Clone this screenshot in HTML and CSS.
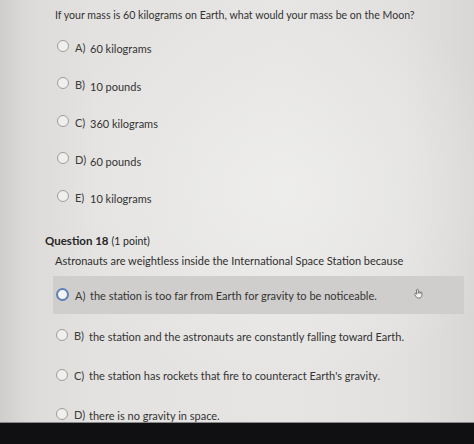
FILE: index.html
```html
<!DOCTYPE html>
<html>
<head>
<meta charset="utf-8">
<link rel="stylesheet" href="styles.css">
</head>
<body>
<div class="screen">
  <div class="content">
    <p class="q-text q1">If your mass is 60 kilograms on Earth, what would your mass be on the Moon?</p>
    <div class="opts1">
      <div class="opt"><span class="radio"></span><span class="letter">A)</span><span class="ans">60 kilograms</span></div>
      <div class="opt"><span class="radio"></span><span class="letter">B)</span><span class="ans">10 pounds</span></div>
      <div class="opt"><span class="radio"></span><span class="letter">C)</span><span class="ans">360 kilograms</span></div>
      <div class="opt"><span class="radio"></span><span class="letter">D)</span><span class="ans">60 pounds</span></div>
      <div class="opt"><span class="radio"></span><span class="letter">E)</span><span class="ans">10 kilograms</span></div>
    </div>
    <h2 class="q-head"><b>Question 18</b> <span class="pts">(1 point)</span></h2>
    <p class="q-text q2">Astronauts are weightless inside the International Space Station because</p>
    <div class="opts2">
      <div class="opt2 hover"><span class="radio focus"></span><span class="letter">A)</span><span class="ans">the station is too far from Earth for gravity to be noticeable.</span>
        <svg class="cursor" width="11" height="11" viewBox="0 0 11 11"><path d="M3.5 5.5V2.2a0.9 0.9 0 0 1 1.8 0V5M5.3 4.6a0.9 0.9 0 0 1 1.8 0V5.4M7.1 4.9a0.9 0.9 0 0 1 1.8 0V7.2c0 1.7-1.2 2.9-2.9 2.9H5.4c-1 0-1.700-0.5-2.2-1.3L1.7 6.5a0.8 0.8 0 0 1 1.3-0.9L3.5 6.2" fill="#f2f2f2" stroke="#6a6a6a" stroke-width="0.9" stroke-linecap="round" stroke-linejoin="round"/></svg>
      </div>
      <div class="opt2"><span class="radio"></span><span class="letter">B)</span><span class="ans">the station and the astronauts are constantly falling toward Earth.</span></div>
      <div class="opt2"><span class="radio"></span><span class="letter">C)</span><span class="ans">the station has rockets that fire to counteract Earth's gravity.</span></div>
      <div class="opt2"><span class="radio"></span><span class="letter">D)</span><span class="ans">there is no gravity in space.</span></div>
    </div>
  </div>
  <div class="bezel"></div>
</div>
</body>
</html>
```
FILE: styles.css
```css
html, body {
  margin: 0;
  padding: 0;
}
body {
  width: 474px;
  height: 444px;
  overflow: hidden;
  font-family: Lato, "Open Sans", sans-serif;
  color: #333;
}
.screen {
  display: flex;
  flex-direction: column;
  height: 444px;
}
.content {
  height: 422px;
  overflow: hidden;
  padding-top: 8px;
  box-sizing: border-box;
  background:
    radial-gradient(ellipse at 60% 45%, rgba(240,240,238,0.7), rgba(240,240,238,0) 60%),
    linear-gradient(90deg, #cfcecc 0%, #dcdbd9 6%, #e3e2e0 20%, #e6e5e3 60%, #e2e1df 85%, #d8d7d5 100%);
}
.q-text {
  margin: 0;
  font-size: 10.6px;
  line-height: 14px;
  height: 14px;
  white-space: nowrap;
}
.q1 {
  margin-left: 55px;
  color: #333;
}
.opts1 {
  margin-top: 6.5px;
}
.opt {
  display: flex;
  align-items: center;
  height: 37.5px;
  padding-left: 57px;
  font-size: 11px;
}
.radio {
  flex: none;
  width: 12px;
  height: 12px;
  box-sizing: border-box;
  border-radius: 50%;
  border: 1px solid #9c9c9a;
  background: #efefed;
  margin-top: -3px;
}
.letter {
  margin-left: 6px;
  width: 15px;
  color: #3a3a3a;
}
.ans {
  color: #333;
  white-space: nowrap;
  margin-top: 3px;
}
.q-head {
  margin: 17px 0 0 45px;
  font-size: 11.5px;
  line-height: 16px;
  height: 16px;
  font-weight: normal;
  color: #262626;
}
.q-head b {
  font-weight: 700;
}
.pts {
  font-size: 10.5px;
}
.q2 {
  margin-left: 55px;
  margin-top: 5px;
  color: #2e2e2e;
  font-size: 11px;
}
.opts2 {
  margin-top: 8px;
}
.opt2 {
  position: relative;
  display: flex;
  align-items: center;
  height: 39.5px;
  padding-left: 56px;
  font-size: 11px;
}
.opt2 .radio {
  margin-top: -1px;
}
.opt2 .ans {
  margin-top: 1px;
}
.opt2.hover {
  height: 38px;
  margin: 0 10px 2px 53px;
  padding-left: 3px;
  background: #cfcecc;
}
.radio.focus {
  width: 13px;
  height: 13px;
  border: 2px solid #5f7fb8;
  background: #f4f4f4;
}
.cursor {
  position: absolute;
  left: 360px;
  top: 12px;
}
.bezel {
  flex: none;
  height: 22px;
  background: #101012;
  border-top: 1px solid #8a8a8a;
  box-sizing: border-box;
}
```
